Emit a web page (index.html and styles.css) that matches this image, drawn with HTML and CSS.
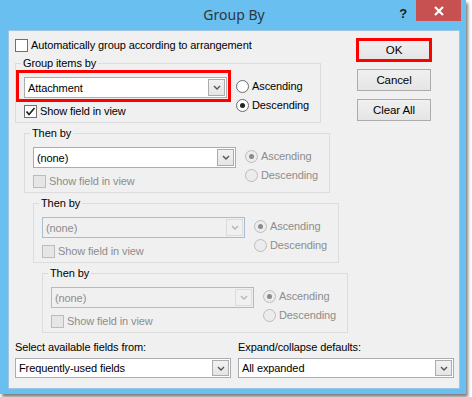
FILE: index.html
```html
<!DOCTYPE html>
<html>
<head>
<meta charset="utf-8">
<link rel="stylesheet" href="styles.css">
</head>
<body>
<div class="window">
  <div class="titlebar">
    <div></div>
    <div class="title">Group By</div>
    <div class="controls">
      <span class="help">?</span>
      <span class="close"><svg width="10" height="10" viewBox="0 0 10 10"><path d="M1 1L9 9M9 1L1 9" stroke="#fff" stroke-width="2.2"/></svg></span>
    </div>
  </div>
  <div class="content">
    <div class="top">
      <div class="left">
        <label class="row"><span class="cb"></span>Automatically group according to arrangement</label>

        <div class="group g1">
          <div class="legend">Group items by</div>
          <div class="gbody">
            <div class="gleft">
              <div class="combo-wrap">
                <div class="combo"><span class="val">Attachment</span><span class="drop"><svg width="8" height="5" viewBox="0 0 8 5"><path d="M1 1L4 4L7 1" fill="none" stroke="#555" stroke-width="1.4"/></svg></span></div>
                <span class="mark"></span>
              </div>
              <label class="row chk"><span class="cb checked"><svg width="11" height="11" viewBox="0 0 11 11"><path d="M1.5 5.5L4 8.5L9.5 2" fill="none" stroke="#222" stroke-width="1.7"/></svg></span>Show field in view</label>
            </div>
            <div class="radios">
              <label class="row"><span class="rb"></span>Ascending</label>
              <label class="row"><span class="rb on"></span>Descending</label>
            </div>
          </div>
        </div>

        <div class="group g2">
          <div class="legend">Then by</div>
          <div class="gbody">
            <div class="gleft">
              <div class="combo"><span class="val">(none)</span><span class="drop"><svg width="8" height="5" viewBox="0 0 8 5"><path d="M1 1L4 4L7 1" fill="none" stroke="#555" stroke-width="1.4"/></svg></span></div>
              <label class="row chk dis"><span class="cb"></span>Show field in view</label>
            </div>
            <div class="radios dis">
              <label class="row"><span class="rb on"></span>Ascending</label>
              <label class="row"><span class="rb"></span>Descending</label>
            </div>
          </div>
        </div>

        <div class="group g3">
          <div class="legend">Then by</div>
          <div class="gbody">
            <div class="gleft">
              <div class="combo off"><span class="val">(none)</span><span class="drop"><svg width="8" height="5" viewBox="0 0 8 5"><path d="M1 1L4 4L7 1" fill="none" stroke="#b5b5b5" stroke-width="1.4"/></svg></span></div>
              <label class="row chk dis"><span class="cb"></span>Show field in view</label>
            </div>
            <div class="radios dis">
              <label class="row"><span class="rb on"></span>Ascending</label>
              <label class="row"><span class="rb"></span>Descending</label>
            </div>
          </div>
        </div>

        <div class="group g4">
          <div class="legend">Then by</div>
          <div class="gbody">
            <div class="gleft">
              <div class="combo off"><span class="val">(none)</span><span class="drop"><svg width="8" height="5" viewBox="0 0 8 5"><path d="M1 1L4 4L7 1" fill="none" stroke="#b5b5b5" stroke-width="1.4"/></svg></span></div>
              <label class="row chk dis"><span class="cb"></span>Show field in view</label>
            </div>
            <div class="radios dis">
              <label class="row"><span class="rb on"></span>Ascending</label>
              <label class="row"><span class="rb"></span>Descending</label>
            </div>
          </div>
        </div>
      </div>
      <div class="buttons">
        <button class="btn ok">OK</button>
        <button class="btn">Cancel</button>
        <button class="btn">Clear All</button>
      </div>
    </div>
    <div class="bottom">
      <div class="blabel">Select available fields from:</div>
      <div class="blabel">Expand/collapse defaults:</div>
      <div class="combo wide"><span class="val">Frequently-used fields</span><span class="drop"><svg width="8" height="5" viewBox="0 0 8 5"><path d="M1 1L4 4L7 1" fill="none" stroke="#555" stroke-width="1.4"/></svg></span></div>
      <div class="combo wide"><span class="val">All expanded</span><span class="drop"><svg width="8" height="5" viewBox="0 0 8 5"><path d="M1 1L4 4L7 1" fill="none" stroke="#555" stroke-width="1.4"/></svg></span></div>
    </div>
  </div>
</div>
</body>
</html>
```
FILE: styles.css
```css
* { box-sizing: border-box; }
html, body { margin: 0; padding: 0; }
body {
  background: #ffffff;
  font-family: "Liberation Sans", Arial, sans-serif;
  font-size: 11px;
  letter-spacing: -0.1px;
  color: #000;
  width: 472px;
  height: 397px;
  overflow: hidden;
}
.window {
  width: 466px;
  height: 394px;
  background: #69c0f0;
  display: flex;
  flex-direction: column;
  box-shadow: 2px 3px 3px rgba(0,0,0,0.5);
}
.titlebar {
  height: 30px;
  display: grid;
  grid-template-columns: 1fr auto 1fr;
  align-items: start;
}
.title {
  font-family: "Noto Sans", "Open Sans", sans-serif;
  font-size: 14px;
  letter-spacing: 0;
  color: #2e3640;
  line-height: 30px;
  padding-left: 2px;
}
.controls {
  display: flex;
  justify-content: flex-end;
  align-items: flex-start;
  padding-right: 5px;
}
.help {
  font-family: "Liberation Sans", sans-serif;
  font-weight: bold;
  font-size: 13px;
  color: #1a1a1a;
  margin-right: 9px;
  margin-top: 7px;
  line-height: 14px;
}
.close {
  width: 45px;
  height: 21px;
  background: #c75050;
  display: flex;
  align-items: center;
  justify-content: center;
}
.content {
  flex: 1;
  margin: 0 6px 5px 8px;
  background: #f0f0f0;
  border: 1px solid #9ec6e2;
  display: flex;
  flex-direction: column;
}
.top {
  display: flex;
}
.left {
  flex: 1;
  padding: 6px 0 0 6px;
}
.row {
  display: flex;
  align-items: center;
  height: 16px;
  line-height: 16px;
  white-space: nowrap;
}
.cb {
  width: 13px;
  height: 13px;
  border: 1px solid #707070;
  background: #fff;
  margin-right: 3px;
  display: flex;
  align-items: center;
  justify-content: center;
  flex: none;
}
.rb {
  width: 13px;
  height: 13px;
  border: 1px solid #6a6a6a;
  border-radius: 50%;
  background: #fff;
  margin-right: 3px;
  flex: none;
  display: flex;
  align-items: center;
  justify-content: center;
}
.rb.on::after {
  content: "";
  width: 5px;
  height: 5px;
  border-radius: 50%;
  background: #222;
}
.group {
  width: 306px;
  height: 60px;
  border: 1px solid #dcdcdc;
  margin-top: 10px;
}
.g2 { margin-left: 9px; }
.g3 { margin-left: 18px; }
.g4 { margin-left: 27px; }
.legend {
  width: fit-content;
  height: 16px;
  line-height: 16px;
  margin: -9px 0 0 5px;
  padding: 0 2px;
  background: #f0f0f0;
}
.gbody {
  display: flex;
  margin-top: 6px;
  padding-left: 8px;
}
.gleft {
  width: 203px;
  display: flex;
  flex-direction: column;
}
.chk { margin-top: 5px; }
.radios {
  margin-left: 9px;
  display: flex;
  flex-direction: column;
  gap: 3px;
  margin-top: 1px;
}
.combo {
  width: 203px;
  height: 21px;
  border: 1px solid #abadb3;
  background: #fff;
  display: flex;
  align-items: center;
  justify-content: space-between;
  padding: 0 1px 0 3px;
}
.combo .val { line-height: 16px; }
.drop {
  width: 17px;
  height: 17px;
  border: 1px solid #acacac;
  background: linear-gradient(#f2f2f2, #e5e5e5);
  display: flex;
  align-items: center;
  justify-content: center;
}
.combo.off {
  background: #f0f0f0;
  border-color: #a9bcd3;
  color: #8d8d8d;
}
.combo.off .drop {
  border-color: #dcdcdc;
  background: #f0f0f0;
}
.dis { color: #8d8d8d; }
.dis .cb { border-color: #bcbcbc; background: #e6e6e6; }
.dis .rb { border-color: #bcbcbc; background: #ececec; }
.dis .rb.on::after { background: #8a8a8a; }
.combo-wrap {
  position: relative;
}
.mark {
  position: absolute;
  left: -8px;
  top: -7px;
  width: 215px;
  height: 32px;
  border: 3px solid #ff0000;
}
.buttons {
  width: 74px;
  margin: 8px 28px 0 0;
  display: flex;
  flex-direction: column;
  gap: 8px;
}
.btn {
  width: 74px;
  height: 22px;
  border: 1px solid #acacac;
  background: linear-gradient(#f0f0f0, #e5e5e5);
  font-family: "Liberation Sans", Arial, sans-serif;
  font-size: 11.5px;
  letter-spacing: -0.1px;
  color: #000;
  padding: 0;
  margin: 0;
}
.btn.ok {
  outline: 3px solid #ff0000;
  outline-offset: -2px;
}
.bottom {
  display: grid;
  grid-template-columns: 216px 216px;
  column-gap: 7px;
  padding: 6px 0 0 6px;
}
.blabel {
  line-height: 16px;
  height: 16px;
  margin-bottom: 3px;
}
.combo.wide {
  width: 216px;
  height: 20px;
}
.combo.wide .drop { height: 16px; }
```
